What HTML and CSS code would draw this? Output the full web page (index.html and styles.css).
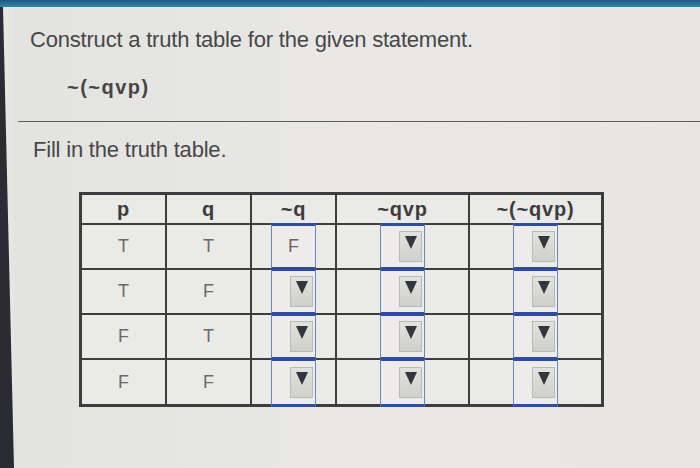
FILE: index.html
```html
<!DOCTYPE html>
<html lang="en">
<head>
<meta charset="utf-8">
<title>Truth table</title>
<link rel="stylesheet" href="styles.css">
</head>
<body>
<div class="screen">
  <div class="topbar"></div>
  <div class="main">
    <div class="bezel"></div>
    <div class="content">
      <p class="prompt">Construct a truth table for the given statement.</p>
      <p class="formula">~(~qvp)</p>
      <div class="rule"></div>
      <p class="instr">Fill in the truth table.</p>
      <div class="tt">
        <div class="cell head">p</div>
        <div class="cell head">q</div>
        <div class="cell head">~q</div>
        <div class="cell head">~qvp</div>
        <div class="cell head">~(~qvp)</div>

        <div class="cell">T</div>
        <div class="cell">T</div>
        <div class="cell"><div class="dd filled">F</div></div>
        <div class="cell"><div class="dd"><span class="btn"><span class="tri"></span></span></div></div>
        <div class="cell"><div class="dd"><span class="btn"><span class="tri"></span></span></div></div>

        <div class="cell">T</div>
        <div class="cell">F</div>
        <div class="cell"><div class="dd"><span class="btn"><span class="tri"></span></span></div></div>
        <div class="cell"><div class="dd"><span class="btn"><span class="tri"></span></span></div></div>
        <div class="cell"><div class="dd"><span class="btn"><span class="tri"></span></span></div></div>

        <div class="cell">F</div>
        <div class="cell">T</div>
        <div class="cell"><div class="dd"><span class="btn"><span class="tri"></span></span></div></div>
        <div class="cell"><div class="dd"><span class="btn"><span class="tri"></span></span></div></div>
        <div class="cell"><div class="dd"><span class="btn"><span class="tri"></span></span></div></div>

        <div class="cell last">F</div>
        <div class="cell last">F</div>
        <div class="cell last"><div class="dd"><span class="btn"><span class="tri"></span></span></div></div>
        <div class="cell last"><div class="dd"><span class="btn"><span class="tri"></span></span></div></div>
        <div class="cell last"><div class="dd"><span class="btn"><span class="tri"></span></span></div></div>
      </div>
    </div>
  </div>
</div>
</body>
</html>
```
FILE: styles.css
```css
html, body {
  margin: 0;
  padding: 0;
  background: #e4e4e1;
}
.screen {
  width: 700px;
  height: 468px;
  display: flex;
  flex-direction: column;
  overflow: hidden;
  font-family: "Liberation Sans", Arial, sans-serif;
  background: #e6e6e3;
}
.topbar {
  height: 7px;
  flex: none;
  background: linear-gradient(#1d5a80, #2f86ad);
}
.main {
  flex: 1;
  display: flex;
}
.bezel {
  width: 14px;
  flex: none;
  background: #2b2c33;
  clip-path: polygon(0 0, 3px 0, 14px 100%, 0 100%);
}
.content {
  flex: 1;
  display: flex;
  flex-direction: column;
  background: linear-gradient(90deg, #e3e3e0, #e9e8e6 50%, #e7e6e4);
}
.prompt {
  margin: 20px 0 0 16px;
  font-size: 22px;
  line-height: 26px;
  color: #474747;
  letter-spacing: -0.2px;
}
.formula {
  margin: 22px 0 0 53px;
  font-size: 20px;
  line-height: 24px;
  font-weight: bold;
  color: #454545;
  letter-spacing: 1.5px;
}
.rule {
  margin: 22px 0 0 4px;
  height: 1px;
  background: #5c5c5c;
}
.instr {
  margin: 15px 0 0 19px;
  font-size: 22px;
  line-height: 26px;
  color: #484848;
  letter-spacing: -0.2px;
}
.tt {
  margin: 29px 0 0 65px;
  width: max-content;
  display: grid;
  grid-template-columns: 83px 83px 83px 131px 131px;
  grid-template-rows: 28px 43px 43px 43px 44px;
  gap: 2px;
  padding: 3px;
  background: #3d3d3f;
}
.cell {
  background: #eaeae7;
  display: flex;
  justify-content: center;
  align-items: center;
  font-size: 18px;
  color: #6a6a6a;
}
.head {
  font-weight: bold;
  font-size: 20px;
  letter-spacing: 0.8px;
  color: #3c3c3c;
}
.cell .dd {
  align-self: stretch;
  margin: -2px 0;
}
.cell.last .dd {
  margin-bottom: -3px;
}
.dd {
  width: 45px;
  box-sizing: border-box;
  border-left: 1px solid #6a86c4;
  border-right: 1px solid #6a86c4;
  border-top: 3px solid #2e4d9c;
  border-bottom: 3px solid #2e4d9c;
  background: #edecea;
  display: flex;
  justify-content: flex-end;
  align-items: center;
  padding-right: 2px;
}
.dd.filled {
  justify-content: center;
  padding-right: 0;
  font-size: 18px;
  color: #666;
}
.btn {
  width: 23px;
  height: 31px;
  box-sizing: border-box;
  border: 1px solid #b9bab6;
  background: linear-gradient(#e2e2df, #cfd0cc);
  display: flex;
  justify-content: center;
  align-items: flex-start;
  padding-top: 4px;
}
.tri {
  width: 0;
  height: 0;
  border-left: 6px solid transparent;
  border-right: 6px solid transparent;
  border-top: 13px solid #34363d;
}
```
